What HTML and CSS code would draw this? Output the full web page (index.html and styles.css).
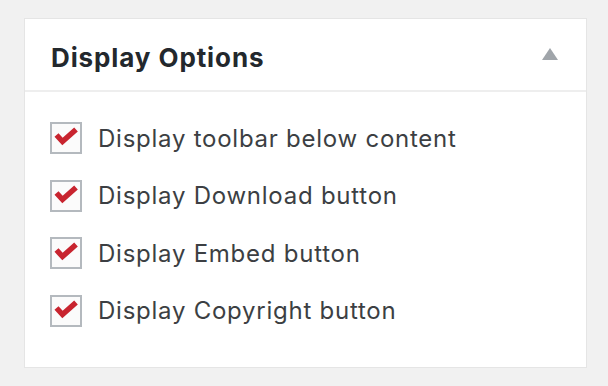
FILE: index.html
```html
<!DOCTYPE html>
<html>
<head>
<meta charset="utf-8">
<link rel="stylesheet" href="styles.css">
</head>
<body>
<div class="card">
  <div class="card-head">
    <h2 class="title">Display Options</h2>
    <span class="toggle"></span>
  </div>
  <div class="card-body">
    <label class="opt"><span class="box"><svg viewBox="0 0 28 28" width="28" height="28"><polyline points="4.5,11 10.5,17.5 24,5.5" fill="none" stroke="#c8242f" stroke-width="5.5"/></svg></span><span class="label">Display toolbar below content</span></label>
    <label class="opt"><span class="box"><svg viewBox="0 0 28 28" width="28" height="28"><polyline points="4.5,11 10.5,17.5 24,5.5" fill="none" stroke="#c8242f" stroke-width="5.5"/></svg></span><span class="label">Display Download button</span></label>
    <label class="opt"><span class="box"><svg viewBox="0 0 28 28" width="28" height="28"><polyline points="4.5,11 10.5,17.5 24,5.5" fill="none" stroke="#c8242f" stroke-width="5.5"/></svg></span><span class="label">Display Embed button</span></label>
    <label class="opt"><span class="box"><svg viewBox="0 0 28 28" width="28" height="28"><polyline points="4.5,11 10.5,17.5 24,5.5" fill="none" stroke="#c8242f" stroke-width="5.5"/></svg></span><span class="label">Display Copyright button</span></label>
  </div>
</div>
</body>
</html>
```
FILE: styles.css
```css
html, body {
  margin: 0;
  padding: 0;
  background: #f1f1f1;
  font-family: Inter, "Liberation Sans", Arial, sans-serif;
}
body {
  padding: 18px 0 0 24px;
}
.card {
  box-sizing: border-box;
  width: 563px;
  height: 350px;
  background: #fff;
  border: 1px solid #e5e5e5;
}
.card-head {
  height: 73px;
  border-bottom: 2px solid #eeeeee;
  display: flex;
  align-items: center;
  justify-content: space-between;
  padding: 5px 28px 0 26px;
  box-sizing: border-box;
}
.title {
  margin: 0;
  font-size: 26px;
  font-weight: bold;
  letter-spacing: 0.9px;
  color: #23282d;
}
.toggle {
  width: 0;
  height: 0;
  border-left: 8px solid transparent;
  border-right: 8px solid transparent;
  border-bottom: 12px solid #a0a5aa;
  margin-top: -6px;
}
.card-body {
  padding: 30px 0 0 25px;
  display: flex;
  flex-direction: column;
  gap: 25.5px;
}
.opt {
  display: flex;
  align-items: center;
  gap: 16px;
  height: 32px;
}
.box {
  box-sizing: border-box;
  width: 32px;
  height: 32px;
  border: 2px solid #b4b9be;
  background: #fbfbfb;
}
.box svg { display: block; }
.label {
  font-size: 24px;
  letter-spacing: 0.75px;
  color: #3c3f43;
}
```
